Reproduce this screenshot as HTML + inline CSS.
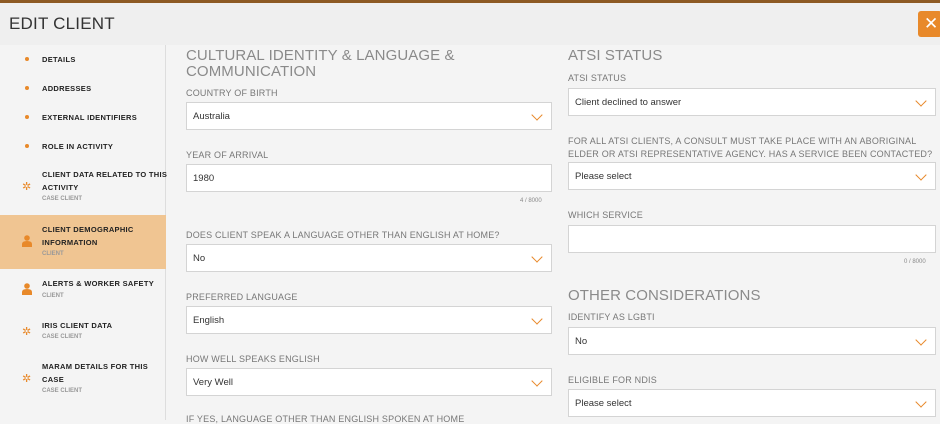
<!DOCTYPE html>
<html><head><style>
*{box-sizing:border-box;margin:0;padding:0}
body{width:940px;height:420px;overflow:hidden;background:#f4f4f4;font-family:"Liberation Sans",sans-serif;position:relative}
.top{position:absolute;left:0;top:0;width:940px;height:3px;background:#8d5a24}
.hdr{position:absolute;left:0;top:3px;width:940px;height:42px;background:#efefef}
.hdr h1{position:absolute;left:9px;top:11px;font-size:17px;font-weight:normal;color:#333;letter-spacing:.2px}
.close{position:absolute;left:918px;top:8px;width:24px;height:26px;background:#e8892a;border-radius:3px;color:#fff;font-size:17px;line-height:26px;padding-left:6px}
.side{position:absolute;left:0;top:45px;width:166px;height:375px;background:#f4f4f4;border-right:1px solid #ddd}
.a{position:absolute;font-size:7.5px;font-weight:bold;color:#222;letter-spacing:.3px;line-height:13px}
.s{position:absolute;font-size:6px;font-weight:bold;color:#999;left:42px}
.dot{position:absolute;left:25px;width:4px;height:4px;border-radius:50%;background:#e8892a}
.act{position:absolute;left:0;top:215px;width:166px;height:54px;background:#f0c592}
.lbl{position:absolute;font-size:9px;color:#777;letter-spacing:.2px}
.h{position:absolute;font-size:15px;color:#8a8a8a;line-height:16px;letter-spacing:.1px}
.in{position:absolute;height:28px;background:#fff;border:1px solid #d4d4d4;font-size:9.5px;color:#333;padding:8px 0 0 6px}
.in.sel:after{content:"";position:absolute;right:10px;top:8px;width:7px;height:7px;border-right:1.2px solid #e8892a;border-bottom:1.2px solid #e8892a;transform:rotate(45deg)}
.cnt{position:absolute;font-size:6px;color:#888}
.ic{position:absolute;left:22px;color:#e8892a;font-size:11px}
.person{position:absolute;left:22px;width:10px;height:12px}
</style></head><body>
<div class="top"></div>
<div class="hdr"><h1>EDIT CLIENT</h1><div class="close">✕</div></div>
<div class="side"></div>
<div class="act"></div>
<div class="dot" style="top:57px"></div><div class="a" style="left:42px;top:53px">DETAILS</div>
<div class="dot" style="top:86px"></div><div class="a" style="left:42px;top:82px">ADDRESSES</div>
<div class="dot" style="top:115px"></div><div class="a" style="left:42px;top:111px">EXTERNAL IDENTIFIERS</div>
<div class="dot" style="top:144px"></div><div class="a" style="left:42px;top:140px">ROLE IN ACTIVITY</div>
<div class="ic" style="top:180px">✲</div><div class="a" style="left:42px;top:168px">CLIENT DATA RELATED TO THIS<br>ACTIVITY</div><div class="s" style="top:196px">CASE CLIENT</div>
<svg class="person" style="top:235px" viewBox="0 0 10 12"><circle cx="5" cy="3" r="2.8" fill="#e8892a"/><path d="M0 12V9Q0 6 5 6Q10 6 10 9V12Z" fill="#e8892a"/></svg>
<div class="a" style="left:42px;top:223px">CLIENT DEMOGRAPHIC<br>INFORMATION</div><div class="s" style="top:251px">CLIENT</div>
<svg class="person" style="top:283px" viewBox="0 0 10 12"><circle cx="5" cy="3" r="2.8" fill="#e8892a"/><path d="M0 12V9Q0 6 5 6Q10 6 10 9V12Z" fill="#e8892a"/></svg>
<div class="a" style="left:42px;top:277px">ALERTS &amp; WORKER SAFETY</div><div class="s" style="top:293px">CLIENT</div>
<div class="ic" style="top:325px">✲</div><div class="a" style="left:42px;top:319px">IRIS CLIENT DATA</div><div class="s" style="top:334px">CASE CLIENT</div>
<div class="ic" style="top:372px">✲</div><div class="a" style="left:42px;top:360px">MARAM DETAILS FOR THIS<br>CASE</div><div class="s" style="top:388px">CASE CLIENT</div>

<div class="h" style="left:186px;top:48px">CULTURAL IDENTITY &amp; LANGUAGE &amp;<br>COMMUNICATION</div>
<div class="lbl" style="left:186px;top:88px">COUNTRY OF BIRTH</div>
<div class="in sel" style="left:186px;top:102px;width:366px">Australia</div>
<div class="lbl" style="left:186px;top:150px">YEAR OF ARRIVAL</div>
<div class="in" style="left:186px;top:164px;width:366px">1980</div>
<div class="cnt" style="left:520px;top:198px">4 / 8000</div>
<div class="lbl" style="left:186px;top:230px">DOES CLIENT SPEAK A LANGUAGE OTHER THAN ENGLISH AT HOME?</div>
<div class="in sel" style="left:186px;top:244px;width:366px">No</div>
<div class="lbl" style="left:186px;top:292px">PREFERRED LANGUAGE</div>
<div class="in sel" style="left:186px;top:306px;width:366px">English</div>
<div class="lbl" style="left:186px;top:354px">HOW WELL SPEAKS ENGLISH</div>
<div class="in sel" style="left:186px;top:368px;width:366px">Very Well</div>
<div class="lbl" style="left:186px;top:414px">IF YES, LANGUAGE OTHER THAN ENGLISH SPOKEN AT HOME</div>

<div class="h" style="left:568px;top:48px">ATSI STATUS</div>
<div class="lbl" style="left:568px;top:73px">ATSI STATUS</div>
<div class="in sel" style="left:568px;top:88px;width:368px">Client declined to answer</div>
<div class="lbl" style="left:568px;top:135px;line-height:13px">FOR ALL ATSI CLIENTS, A CONSULT MUST TAKE PLACE WITH AN ABORIGINAL<br>ELDER OR ATSI REPRESENTATIVE AGENCY. HAS A SERVICE BEEN CONTACTED?</div>
<div class="in sel" style="left:568px;top:162px;width:368px">Please select</div>
<div class="lbl" style="left:568px;top:210px">WHICH SERVICE</div>
<div class="in" style="left:568px;top:225px;width:368px"></div>
<div class="cnt" style="left:904px;top:259px">0 / 8000</div>
<div class="h" style="left:568px;top:288px">OTHER CONSIDERATIONS</div>
<div class="lbl" style="left:568px;top:312px">IDENTIFY AS LGBTI</div>
<div class="in sel" style="left:568px;top:327px;width:368px">No</div>
<div class="lbl" style="left:568px;top:375px">ELIGIBLE FOR NDIS</div>
<div class="in sel" style="left:568px;top:389px;width:368px">Please select</div>
</body></html>
